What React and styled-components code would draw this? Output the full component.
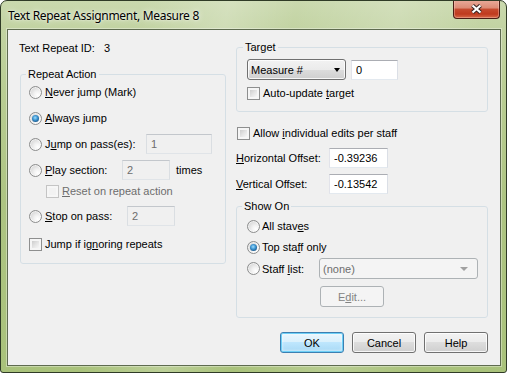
import styled, { createGlobalStyle } from 'styled-components'

const GlobalStyle = createGlobalStyle`
  html, body {
    margin: 0;
    padding: 0;
    background: #fff;
  }
  body {
    font-family: "Liberation Sans", Arial, sans-serif;
    font-size: 11px;
    color: #000;
  }
`

function App() {
  return (
    <>
      <GlobalStyle />
      <Window>
        <TitleBar>
          <Title>Text Repeat Assignment, Measure 8</Title>
          <CloseButton>
            <svg width="13" height="10" viewBox="0 0 13 10">
              <path d="M2.5 1.5 L10.5 8.5 M10.5 1.5 L2.5 8.5" stroke="#3b2624" strokeWidth="4.2" fill="none" />
              <path d="M2.5 1.5 L10.5 8.5 M10.5 1.5 L2.5 8.5" stroke="#fff" strokeWidth="2.2" fill="none" />
            </svg>
          </CloseButton>
        </TitleBar>

        <Client>
          <Columns>
            <LeftCol>
              <IdRow>
                <IdLabel>Text Repeat ID:</IdLabel>
                <span>3</span>
              </IdRow>

              <Group $mt={13} $pad="1px 8px 12px 8px" $w={206} $ml={1}>
                <Legend $ml={-3}>Repeat Action</Legend>
                <Row $h={20}>
                  <Radio />
                  <Caption><U>N</U>ever jump (Mark)</Caption>
                </Row>
                <Row $h={20} $mt={6}>
                  <Radio $checked />
                  <Caption><U>A</U>lways jump</Caption>
                </Row>
                <Row $h={20} $mt={6}>
                  <Radio />
                  <Caption $w={101}>J<U>u</U>mp on pass(es):</Caption>
                  <TextBox readOnly disabled value="1" $w={66} />
                </Row>
                <Row $h={20} $mt={6}>
                  <Radio />
                  <Caption $w={77}><U>P</U>lay section:</Caption>
                  <TextBox readOnly disabled value="2" $w={48} />
                  <Caption $gap={6}>times</Caption>
                </Row>
                <Row $h={14} $mt={4} $ml={17}>
                  <CheckBox $disabled />
                  <Caption $disabled><U>R</U>eset on repeat action</Caption>
                </Row>
                <Row $h={20} $mt={8}>
                  <Radio />
                  <Caption $w={82}><U>S</U>top on pass:</Caption>
                  <TextBox readOnly disabled value="2" $w={48} />
                </Row>
                <Row $h={14} $mt={11}>
                  <CheckBox />
                  <Caption>Jump if ig<U>n</U>oring repeats</Caption>
                </Row>
              </Group>
            </LeftCol>

            <RightCol>
              <Group $pad="5px 10px 11px 10px" $w={252}>
                <Legend $ml={-4}>Target</Legend>
                <Row $h={21}>
                  <Combo $w={99}>
                    <span>Measure #</span>
                    <Arrow />
                  </Combo>
                  <TextBox readOnly value="0" $w={47} $ml={5} />
                </Row>
                <Row $h={14} $mt={6}>
                  <CheckBox />
                  <Caption>Auto-update <U>t</U>arget</Caption>
                </Row>
              </Group>

              <Row $h={14} $mt={14} $ml={1}>
                <CheckBox />
                <Caption>Allow <U>i</U>ndividual edits per staff</Caption>
              </Row>
              <Row $h={20} $mt={8}>
                <FieldLabel><U>H</U>orizontal Offset:</FieldLabel>
                <TextBox readOnly value="-0.39236" $w={59} />
              </Row>
              <Row $h={20} $mt={6}>
                <FieldLabel><U>V</U>ertical Offset:</FieldLabel>
                <TextBox readOnly value="-0.13542" $w={59} />
              </Row>

              <Group $mt={6} $pad="6px 10px 10px 10px" $w={252}>
                <Legend $ml={-5}>Show On</Legend>
                <Row $h={14}>
                  <Radio />
                  <Caption $gap={2}>All stav<U>e</U>s</Caption>
                </Row>
                <Row $h={14} $mt={7}>
                  <Radio $checked />
                  <Caption $gap={2}>Top sta<U>f</U>f only</Caption>
                </Row>
                <Row $h={21} $mt={4}>
                  <Radio />
                  <Caption $gap={2} $w={57}>Staff <U>l</U>ist:</Caption>
                  <Combo $w={159} $disabled>
                    <span>(none)</span>
                    <Arrow $disabled />
                  </Combo>
                </Row>
                <Row $h={21} $mt={7} $ml={73}>
                  <Button $disabled>E<U>d</U>it...</Button>
                </Row>
              </Group>
            </RightCol>
          </Columns>

          <ButtonRow>
            <Button $default>OK</Button>
            <Button>Cancel</Button>
            <Button>Help</Button>
          </ButtonRow>
        </Client>
      </Window>
    </>
  )
}

export default App

const Window = styled.div`
  width: 507px;
  height: 373px;
  box-sizing: border-box;
  border: 1px solid #2f3b26;
  border-radius: 7px 7px 3px 3px;
  overflow: hidden;
  display: flex;
  flex-direction: column;
  background:
    linear-gradient(100deg, rgba(255,255,255,0) 25%, rgba(255,255,255,.22) 40%, rgba(255,255,255,0) 52%, rgba(255,255,255,.18) 70%, rgba(255,255,255,0) 85%),
    linear-gradient(180deg, #cad9ae 0, #c2d3a2 28px, #b9cd93 90px, #adc482 200px, #a9c27b 100%);
`

const TitleBar = styled.div`
  height: 28px;
  flex: none;
  display: flex;
  align-items: flex-start;
  justify-content: space-between;
  padding-left: 7px;
`

const Title = styled.div`
  align-self: center;
  margin-top: 1px;
  font-family: "Segoe UI", "Noto Sans", sans-serif;
  font-size: 12px;
  letter-spacing: -0.3px;
  color: #000;
  text-shadow: 0 0 6px rgba(255,255,255,.9), 0 0 2px rgba(255,255,255,.8);
`

const CloseButton = styled.div`
  width: 47px;
  height: 19px;
  margin: -1px 6px 0 0;
  box-sizing: border-box;
  border: 1px solid #4a1d14;
  border-top: none;
  border-radius: 0 0 4px 4px;
  background: linear-gradient(180deg, #e9ab9b 0, #dc8a74 45%, #c64b2f 50%, #bf3a1e 78%, #d86a4a 100%);
  box-shadow: inset 0 0 0 1px rgba(255,220,210,.35);
  display: flex;
  align-items: center;
  justify-content: center;
`

const Client = styled.div`
  flex: none;
  height: 337px;
  margin: 0 5px 0 6px;
  box-sizing: border-box;
  border: 1px solid #5e6b4f;
  box-shadow: 0 0 0 1px rgba(255,255,255,.35);
  background: #f0f0f0;
  display: flex;
  flex-direction: column;
  padding: 11px 0 0 11px;
`

const Columns = styled.div`
  display: grid;
  grid-template-columns: 207px 252px;
  column-gap: 10px;
  align-items: start;
`

const LeftCol = styled.div`
  display: flex;
  flex-direction: column;
`

const RightCol = styled.div`
  display: flex;
  flex-direction: column;
`

const IdRow = styled.div`
  height: 14px;
  display: flex;
  align-items: center;
`

const IdLabel = styled.span`
  width: 85px;
`

const Group = styled.fieldset`
  box-sizing: border-box;
  width: ${p => p.$w}px;
  min-width: 0;
  margin: ${p => p.$mt || 0}px 0 0 ${p => p.$ml || 0}px;
  padding: ${p => p.$pad};
  border: 1px solid #d5dfe5;
  border-radius: 3px;
  display: flex;
  flex-direction: column;
`

const Legend = styled.legend`
  padding: 0 2px;
  margin-left: ${p => p.$ml || 0}px;
  line-height: 13px;
  font-size: 11px;
`

const Row = styled.div`
  height: ${p => p.$h}px;
  margin-top: ${p => p.$mt || 0}px;
  margin-left: ${p => p.$ml || 0}px;
  display: flex;
  align-items: center;
  white-space: nowrap;
`

const Caption = styled.span`
  margin-left: ${p => p.$gap ?? 3}px;
  ${p => p.$w ? `width: ${p.$w}px; flex: none;` : ''}
  color: ${p => p.$disabled ? '#6d6d6d' : '#000'};
`

const FieldLabel = styled.span`
  width: 93px;
  flex: none;
`

const U = styled.span`
  text-decoration: underline;
  text-underline-offset: 1px;
`

const Radio = styled.span`
  flex: none;
  width: 13px;
  height: 13px;
  box-sizing: border-box;
  border-radius: 50%;
  border: 1px solid #8c8d8d;
  background: radial-gradient(circle at 70% 72%, #ffffff 0, #f3f3f3 30%, #d2d2d2 85%, #c4c4c4 100%);
  box-shadow: inset 0 0 0 1px rgba(255,255,255,.6);
  display: flex;
  align-items: center;
  justify-content: center;

  &::after {
    content: '';
    display: ${p => p.$checked ? 'block' : 'none'};
    width: 7px;
    height: 7px;
    border-radius: 50%;
    background: radial-gradient(circle at 45% 40%, #9fdcfb 0, #3f97d3 40%, #1b5a8e 75%, #163c5e 100%);
  }
`

const CheckBox = styled.span`
  flex: none;
  width: 13px;
  height: 13px;
  box-sizing: border-box;
  border: 1px solid ${p => p.$disabled ? '#c4c4c4' : '#8e8f8f'};
  background: #f6f6f6;
  padding: 2px;

  &::after {
    content: '';
    display: block;
    width: 100%;
    height: 100%;
    background: ${p => p.$disabled
      ? '#f2f2f2'
      : 'linear-gradient(135deg, #cdcdcd 0, #e4e4e4 50%, #f7f7f7 100%)'};
  }
`

const TextBox = styled.input`
  flex: none;
  width: ${p => p.$w}px;
  height: 20px;
  margin: 0 0 0 ${p => p.$ml || 0}px;
  box-sizing: border-box;
  padding: 0 4px;
  font-family: inherit;
  font-size: 11px;
  outline: none;
  color: ${p => p.disabled ? '#6d6d6d' : '#000'};
  background: ${p => p.disabled ? '#f0f0f0' : '#fff'};
  border: 1px solid;
  border-color: ${p => p.disabled
    ? '#c3c7cc #dadee2 #e0e4e8 #dadee2'
    : '#abadb3 #dbdfe6 #e3e9ef #e2e3ea'};
  border-radius: 0;
`

const Combo = styled.div`
  flex: none;
  width: ${p => p.$w}px;
  height: 21px;
  box-sizing: border-box;
  padding: 0 5px 0 3px;
  border: 1px solid ${p => p.$disabled ? '#adb2b5' : '#707070'};
  border-radius: 3px;
  color: ${p => p.$disabled ? '#6d6d6d' : '#000'};
  background: ${p => p.$disabled
    ? '#f4f4f4'
    : 'linear-gradient(180deg, #f2f2f2 0, #ebebeb 50%, #dddddd 50%, #cfcfcf 100%)'};
  box-shadow: ${p => p.$disabled ? 'none' : 'inset 0 0 0 1px rgba(255,255,255,.8)'};
  display: flex;
  align-items: center;
  justify-content: space-between;
`

const Arrow = styled.span`
  width: 0;
  height: 0;
  border-left: ${p => p.$disabled ? 4 : 3.5}px solid transparent;
  border-right: ${p => p.$disabled ? 4 : 3.5}px solid transparent;
  border-top: 4px solid ${p => p.$disabled ? '#a0a0a0' : '#000'};
  margin-top: 1px;
  margin-right: ${p => p.$disabled ? 4 : 0}px;
`

const ButtonRow = styled.div`
  width: 469px;
  margin-top: 14px;
  display: flex;
  justify-content: flex-end;
  gap: 8px;
`

const Button = styled.div`
  width: 64px;
  height: 21px;
  box-sizing: border-box;
  border: 1px solid ${p => p.$default ? '#3c7fb1' : p.$disabled ? '#adb2b5' : '#707070'};
  border-radius: 3px;
  color: ${p => p.$disabled ? '#838383' : '#000'};
  background: ${p => p.$default
    ? 'linear-gradient(180deg, #eaf6fd 0, #d9f0fc 50%, #bee6fd 50%, #a7d9f5 100%)'
    : p.$disabled
      ? '#f4f4f4'
      : 'linear-gradient(180deg, #f2f2f2 0, #ebebeb 50%, #dddddd 50%, #cfcfcf 100%)'};
  box-shadow: ${p => p.$default
    ? 'inset 0 0 0 1px #6ed0f7, inset 0 0 3px 1px rgba(255,255,255,.7)'
    : p.$disabled ? 'none' : 'inset 0 0 0 1px rgba(255,255,255,.8)'};
  display: flex;
  align-items: center;
  justify-content: center;
`
